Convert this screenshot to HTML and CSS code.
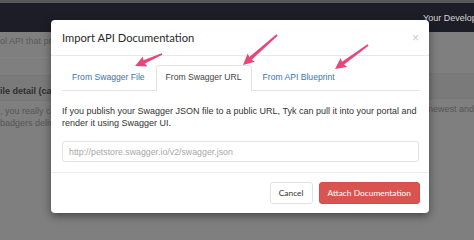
FILE: index.html
```html
<!DOCTYPE html>
<html>
<head>
<meta charset="utf-8">
<link rel="stylesheet" href="styles.css">
</head>
<body>
<div class="page">
  <div class="topstrip"></div>
  <header class="navbar"><span class="nav-title">Your Developer Portal</span></header>
  <main class="content">
    <section class="bg-left">
      <p class="bg-line">ol API that provides access</p>
      <div class="bg-sep"></div>
      <div class="bg-panel">
        <div class="bg-heading">ile detail (card)</div>
        <p class="bg-text">, you really can</p>
        <p class="bg-text">badgers deliver</p>
      </div>
    </section>
    <section class="bg-right">
      <div class="bg-panel right">
        <div class="bg-heading"></div>
        <p class="bg-text">newest and</p>
      </div>
    </section>
  </main>
</div>

<div class="modal">
  <div class="modal-header">
    <h4 class="modal-title">Import API Documentation</h4>
    <span class="close">&times;</span>
  </div>
  <div class="modal-body">
    <ul class="tabs">
      <li class="tab">From Swagger File</li>
      <li class="tab active">From Swagger URL</li>
      <li class="tab">From API Blueprint</li>
    </ul>
    <div class="tab-content">
      <p class="desc">If you publish your Swagger JSON file to a public URL, Tyk can pull it into your portal and render it using Swagger UI.</p>
      <input class="url-input" type="text" placeholder="http://petstore.swagger.io/v2/swagger.json">
    </div>
  </div>
  <div class="modal-footer">
    <button class="btn btn-default">Cancel</button>
    <button class="btn btn-danger">Attach Documentation</button>
  </div>
</div>

<svg class="arrows" width="474" height="233" viewBox="0 0 474 233">
  <path transform="translate(162 54) rotate(156)" d="M0,-0.9 L19.5,-1.8 L18.5,-5.5 L29.5,0 L18.5,5.5 L19.5,1.8 L0,0.9Z"/>
  <path transform="translate(277 35) rotate(138.6)" d="M0,-0.9 L35.3,-1.8 L34.3,-5.5 L45.3,0 L34.3,5.5 L35.3,1.8 L0,0.9Z"/>
  <path transform="translate(368 45) rotate(144)" d="M0,-0.9 L30.8,-1.8 L29.8,-5.5 L40.8,0 L29.8,5.5 L30.8,1.8 L0,0.9Z"/>
</svg>
</body>
</html>
```

FILE: styles.css
```css
* { box-sizing: border-box; }
html, body { margin: 0; padding: 0; }
body {
  width: 474px;
  height: 233px;
  overflow: hidden;
  background: #7f7f7f;
  font-family: "Liberation Sans", Arial, sans-serif;
  position: relative;
}

/* background page (under backdrop) */
.page { display: flex; flex-direction: column; height: 233px; }
.topstrip { height: 3px; background: #58585c; }
.navbar {
  height: 29px;
  background: #1d1d27;
  display: flex;
  align-items: center;
  padding-left: 423px;
  white-space: nowrap;
  overflow: hidden;
}
.nav-title { color: #d6d6d6; font-size: 9px; }
.content { display: flex; justify-content: space-between; flex: 1; }
.bg-left { width: 60px; overflow: hidden; white-space: nowrap; }
.bg-right { width: 46px; overflow: hidden; white-space: nowrap; }
.bg-line { margin: 3px 0 0; font-size: 9px; line-height: 12px; color: #5a5a5a; }
.bg-sep { margin-top: 10px; border-top: 1px solid #848484; }
.bg-panel { margin-top: 17px; }
.bg-panel.right { margin-top: 41px; }
.bg-heading {
  height: 26px;
  border-top: 1px solid #767676;
  border-bottom: 1px solid #767676;
  background: #7a7a7a;
  font-size: 9px;
  font-weight: bold;
  line-height: 30px;
  color: #2f2f2f;
}
.bg-text { margin: 0; font-size: 9px; line-height: 12px; color: #555; }
.bg-panel .bg-heading + .bg-text { margin-top: 4px; }

/* modal (overlays the page) */
.modal {
  position: absolute;
  left: 51px;
  top: 20px;
  width: 378px;
  background: #fff;
  border-radius: 4px;
  box-shadow: 0 3px 8px rgba(0, 0, 0, 0.45);
}
.modal-header {
  display: flex;
  justify-content: space-between;
  align-items: center;
  padding: 10px 10px 9px 11px;
  border-bottom: 1px solid #e8e8e8;
}
.modal-title {
  margin: 0;
  font-family: Lato, "Liberation Sans", sans-serif;
  font-weight: 400;
  font-size: 11.2px;
  line-height: 16px;
  color: #2a2a2a;
}
.close { color: #c9c9c9; font-size: 12px; line-height: 16px; font-family: "Liberation Sans", Arial, sans-serif; }

.modal-body { padding: 9px 10px 10px 11px; }
.tabs {
  list-style: none;
  margin: 0;
  padding: 0;
  display: flex;
  border-bottom: 1px solid #e3e3e3;
}
.tab {
  margin: 0 1px -1px 0;
  padding: 5px 9px 6px;
  font-size: 8.6px;
  line-height: 12.6px;
  color: #3b73b0;
  border: 1px solid transparent;
  border-radius: 3px 3px 0 0;
}
.tab.active {
  color: #444;
  background: #fff;
  border-color: #e3e3e3 #e3e3e3 transparent;
}
.tab-content { padding-top: 14px; }
.desc {
  margin: 0 0 12px;
  font-size: 9px;
  line-height: 12.4px;
  color: #333;
}
.url-input {
  display: block;
  width: 100%;
  height: 21px;
  padding: 0 6px;
  border: 1px solid #e3e3e3;
  border-radius: 3px;
  font-family: "Liberation Sans", Arial, sans-serif;
  font-size: 8.8px;
  color: #555;
  outline: none;
}
.url-input::placeholder { color: #a8a8a8; }

.modal-footer {
  display: flex;
  justify-content: flex-end;
  gap: 6px;
  padding: 9px 9px 9px;
  border-top: 1px solid #ececec;
}
.btn {
  height: 22px;
  padding: 0 8px;
  border-radius: 3px;
  font-family: Lato, "Liberation Sans", sans-serif;
  font-size: 8.4px;
  line-height: 20px;
  cursor: pointer;
}
.btn-default { background: #fff; border: 1px solid #e2e2e2; color: #333; }
.btn-danger { background: #d9534f; border: 1px solid #d64c48; color: #fff; }

/* annotation arrows */
.arrows { position: absolute; left: 0; top: 0; pointer-events: none; }
.arrows path { fill: #e8467a; }
```
